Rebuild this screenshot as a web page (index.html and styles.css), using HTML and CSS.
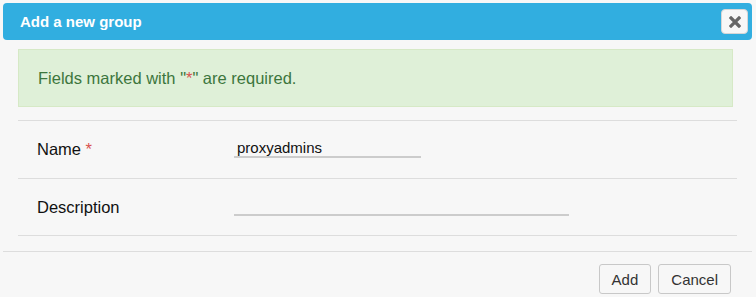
FILE: index.html
```html
<!DOCTYPE html>
<html>
<head>
<meta charset="utf-8">
<link rel="stylesheet" href="styles.css">
</head>
<body>
<div class="modal">
  <div class="header">
    <span class="title">Add a new group</span>
    <button class="close" aria-label="Close">
      <svg width="12" height="12" viewBox="0 0 12 12"><path d="M2 2 L10 10 M10 2 L2 10" stroke="#666666" stroke-width="3.2" stroke-linecap="square"/></svg>
    </button>
  </div>
  <div class="body">
    <div class="alert">Fields marked with "<span class="req">*</span>" are required.</div>
    <div class="form">
      <div class="row">
        <label class="label">Name <span class="req">*</span></label>
        <div class="input name-input">proxyadmins</div>
      </div>
      <div class="row last">
        <label class="label">Description</label>
        <div class="input desc-input"></div>
      </div>
    </div>
  </div>
  <div class="footer">
    <button class="btn">Add</button>
    <button class="btn">Cancel</button>
  </div>
</div>
</body>
</html>
```
FILE: styles.css
```css
html, body {
  margin: 0;
  padding: 0;
  background: #f7f7f7;
  font-family: "Liberation Sans", Arial, sans-serif;
}
.modal {
  padding: 3px 4px 0 3px;
  width: 749px;
}
.header {
  height: 37px;
  background: #31aee0;
  border-radius: 4px;
  display: flex;
  align-items: center;
  justify-content: space-between;
  padding: 0 4px 0 17px;
}
.title {
  color: #fff;
  font-weight: bold;
  font-size: 15px;
}
.close {
  width: 27px;
  height: 25px;
  background: #f7f7f7;
  border: 1px solid #d6d6d6;
  border-radius: 4px;
  padding: 0;
  display: flex;
  align-items: center;
  justify-content: center;
}
.body {
  padding: 9px 15px 15px 15px;
}
.alert {
  height: 56px;
  margin-right: 4px;
  background: #dff0d8;
  border: 1px solid #d6e9c6;
  color: #3c763d;
  font-size: 16.5px;
  display: flex;
  align-items: center;
  padding-left: 19px;
}
.req {
  color: #d9534f;
}
.form {
  margin-top: 13px;
  border-top: 1px solid #dddddd;
}
.row {
  height: 57px;
  border-bottom: 1px solid #dddddd;
  display: flex;
  align-items: center;
  padding-left: 19px;
}
.row.last {
  height: 56px;
}
.label {
  width: 197px;
  font-size: 16.5px;
  color: #111;
}
.input {
  font-size: 15px;
  color: #111;
  border-bottom: 2px solid #cccccc;
  height: 17px;
  line-height: 17px;
  padding-left: 3px;
  box-sizing: content-box;
}
.name-input {
  width: 184px;
  margin-top: -2px;
}
.desc-input {
  width: 332px;
  margin-top: -2px;
}
.footer {
  border-top: 1px solid #dddddd;
  display: flex;
  justify-content: flex-end;
  gap: 7px;
  padding: 12px 21px 0 0;
}
.btn {
  height: 30px;
  padding: 0 12px;
  background: #f7f7f7;
  border: 1px solid #c8c8c8;
  border-radius: 3px;
  font-family: "Liberation Sans", Arial, sans-serif;
  font-size: 15px;
  color: #333;
}
```
